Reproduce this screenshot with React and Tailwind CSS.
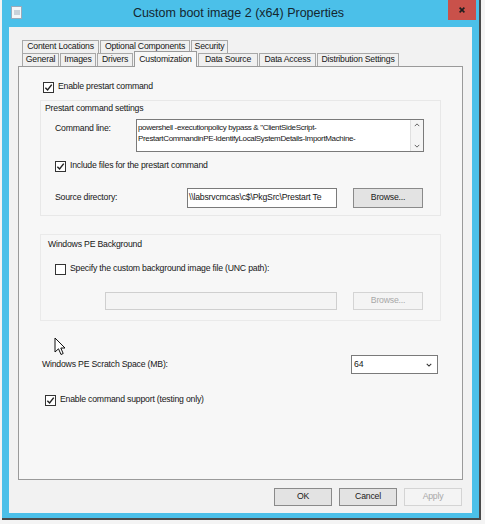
import { useState } from "react";

// Properties dialog for a boot image, Customization tab open.
const lowerTabs = [
  { label: "General", w: "w-[37px]" },
  { label: "Images", w: "w-[36px]" },
  { label: "Drivers", w: "w-[36px]" },
  { label: "Customization", w: "w-[63px]", active: true },
  { label: "Data Source", w: "w-[60px]" },
  { label: "Data Access", w: "w-[57px]" },
  { label: "Distribution Settings", w: "w-[82px]" },
];

const upperTabs = [
  { label: "Content Locations", w: "w-[77px]" },
  { label: "Optional Components", w: "w-[90px]" },
  { label: "Security", w: "w-[37px]" },
];

function Check({ checked, onToggle }) {
  return (
    <button
      type="button"
      onClick={onToggle}
      className="flex h-[11px] w-[11px] shrink-0 items-center justify-center border border-[#333] bg-white"
    >
      {checked && (
        <svg viewBox="0 0 10 10" className="h-[9px] w-[9px]">
          <path d="M1.5 5.2 L4 7.8 L8.6 1.8" fill="none" stroke="#222" strokeWidth="1.6" />
        </svg>
      )}
    </button>
  );
}

function CheckRow({ label, initial, className }) {
  const [on, setOn] = useState(initial);
  return (
    <div className={`flex h-[12px] items-center gap-[4px] ${className}`}>
      <Check checked={on} onToggle={() => setOn(!on)} />
      <span>{label}</span>
    </div>
  );
}

function Tab({ label, w, active }) {
  if (active) {
    return (
      <div
        className={`${w} relative z-10 -mb-px -mt-[2px] flex h-[16px] items-start justify-center border border-b-0 border-[#9a9a9a] bg-[#f7f7f7] pt-[1px]`}
      >
        {label}
      </div>
    );
  }
  return (
    <div className={`${w} flex h-[13px] items-center justify-center border border-b-0 border-[#a8a8a8] bg-[#f0f0f0]`}>
      {label}
    </div>
  );
}

function Button({ children, disabled, className = "" }) {
  return (
    <div
      className={`flex items-center justify-center border ${
        disabled
          ? "border-[#d4d4d4] bg-[#f4f4f4] text-[#a8a8a8]"
          : "border-[#8a8a8a] bg-[#e3e3e3] text-[#1a1a1a]"
      } ${className}`}
    >
      {children}
    </div>
  );
}

export default function App() {
  return (
    <div
      className="h-[524px] w-[485px] overflow-hidden bg-[#f4f4f4] pl-[2px] text-[8.7px] tracking-[-0.2px] text-[#161616]"
      style={{ fontFamily: '"Liberation Sans", Arial, sans-serif' }}
    >
      <div className="flex h-[520px] w-[479px] flex-col border-b-2 border-r-2 border-[#4a4a4a] bg-[#4bc0e9]">
        {/* title bar */}
        <div className="relative flex h-[27px] shrink-0 items-center justify-center">
          <div className="absolute left-[9px] top-[6px] flex h-[13px] w-[11px] items-center justify-center border border-[#9ab] bg-[#f4f6f8]">
            <div className="h-[5px] w-[6px] bg-[#c9d2da]" />
          </div>
          <span className="pr-[4px] text-[12.5px] tracking-normal text-[#14262f]">
            Custom boot image 2 (x64) Properties
          </span>
          <div className="absolute right-[3px] top-0 flex h-[20px] w-[28px] items-center justify-center bg-[#c9514a]">
            <svg viewBox="0 0 10 10" className="h-[8px] w-[8px]">
              <path d="M2 2 L8 8 M8 2 L2 8" stroke="#1e1e1e" strokeWidth="2" />
            </svg>
          </div>
        </div>

        {/* client area */}
        <div className="mx-[7px] flex flex-1 flex-col bg-[#f2f2f2] px-[9px]">
          {/* tab strip */}
          <div className="pl-[4px] pt-[13px]">
            <div className="flex gap-px">
              {upperTabs.map((t) => (
                <Tab key={t.label} {...t} />
              ))}
            </div>
            <div className="flex gap-px">
              {lowerTabs.map((t) => (
                <Tab key={t.label} {...t} />
              ))}
            </div>
          </div>

          {/* tab page */}
          <div className="relative flex h-[414px] flex-col border border-[#9a9a9a] bg-[#f7f7f7] px-[21px]">
            <CheckRow label="Enable prestart command" initial={true} className="ml-[3px] mt-[14px]" />

            <div className="mt-[7px] flex h-[116px] flex-col border border-[#e8e8e8] px-[14px]">
              <div className="-ml-[10px] mt-px leading-[12px]">Prestart command settings</div>
              <div className="mt-[5px] flex">
                <span className="w-[81px] pt-[3px]">Command line:</span>
                <div className="flex h-[33px] w-[288px] border border-[#7a7a7a] bg-white">
                  <div className="flex-1 px-[1px] pt-[2px] text-[8px] leading-[11px] tracking-[-0.35px]">
                    powershell -executionpolicy bypass &amp; "ClientSideScript-
                    <br />
                    PrestartCommandinPE-IdentifyLocalSystemDetails-ImportMachine-
                  </div>
                  <div className="flex w-[13px] flex-col items-center justify-between border-l border-[#e0e0e0] bg-[#f5f5f5] py-[3px] text-[#666]">
                    <svg viewBox="0 0 8 5" className="h-[4px] w-[6px]">
                      <path d="M1 4 L4 1 L7 4" fill="none" stroke="#555" strokeWidth="1.2" />
                    </svg>
                    <svg viewBox="0 0 8 5" className="h-[4px] w-[6px]">
                      <path d="M1 1 L4 4 L7 1" fill="none" stroke="#555" strokeWidth="1.2" />
                    </svg>
                  </div>
                </div>
              </div>
              <CheckRow label="Include files for the prestart command" initial={true} className="mt-[8px]" />
              <div className="mt-[16px] flex items-center">
                <span className="w-[132px]">Source directory:</span>
                <div className="flex h-[20px] w-[150px] items-center overflow-hidden whitespace-nowrap border border-[#7a7a7a] bg-white px-[1px]">
                  \\labsrvcmcas\c$\PkgSrc\Prestart Te
                </div>
                <Button className="ml-[16px] h-[20px] w-[70px]">Browse...</Button>
              </div>
            </div>

            <div className="mt-[18px] flex h-[87px] flex-col border border-[#eaeaea] px-[14px]">
              <div className="-ml-[7px] mt-[3px] leading-[12px]">Windows PE Background</div>
              <CheckRow
                label="Specify the custom background image file (UNC path):"
                initial={false}
                className="mt-[13px]"
              />
              <div className="mt-[17px] flex pl-[50px]">
                <div className="h-[18px] w-[232px] border border-[#cfcfcf] bg-[#f4f4f4]" />
                <Button disabled className="ml-[16px] h-[18px] w-[70px]">
                  Browse...
                </Button>
              </div>
            </div>

            <div className="mt-[34px] flex items-center justify-between">
              <span className="pl-[2px] pt-[1px]">Windows PE Scratch Space (MB):</span>
              <div className="mr-[3px] flex h-[19px] w-[87px] items-center justify-between border border-[#7a7a7a] bg-white pl-[2px] pr-[5px]">
                <span>64</span>
                <svg viewBox="0 0 8 5" className="h-[4px] w-[6px]">
                  <path d="M1 1 L4 4 L7 1" fill="none" stroke="#333" strokeWidth="1.4" />
                </svg>
              </div>
            </div>

            <CheckRow label="Enable command support (testing only)" initial={true} className="ml-[5px] mt-[20px]" />

            {/* mouse pointer resting over the page */}
            <svg viewBox="0 0 12 19" className="absolute left-[35px] top-[270px] h-[19px] w-[12px]">
              <path
                d="M1 1 L1 15 L4.5 11.8 L7 17.5 L9.2 16.5 L6.8 11 L11 11 Z"
                fill="#fff"
                stroke="#111"
                strokeWidth="1"
                strokeLinejoin="round"
              />
            </svg>
          </div>

          {/* dialog buttons */}
          <div className="mt-[8px] flex justify-end gap-[7px] pr-[1px]">
            <Button className="h-[18px] w-[58px]">OK</Button>
            <Button className="h-[18px] w-[58px]">Cancel</Button>
            <Button disabled className="h-[18px] w-[58px]">
              Apply
            </Button>
          </div>
        </div>
        <div className="h-[5px] shrink-0" />
      </div>
    </div>
  );
}
